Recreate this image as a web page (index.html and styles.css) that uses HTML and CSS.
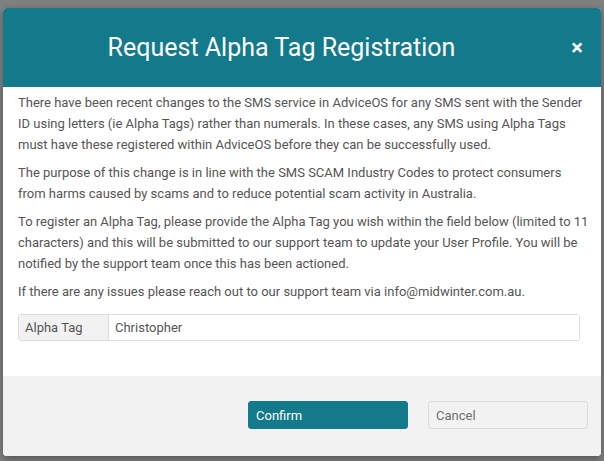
FILE: index.html
```html
<!DOCTYPE html>
<html>
<head>
<meta charset="utf-8">
<link rel="stylesheet" href="styles.css">
</head>
<body>
<div class="backdrop-page">
  <div class="modal">
    <div class="modal-header">
      <h1 class="modal-title">Request Alpha Tag Registration</h1>
      <button class="close" type="button">&times;</button>
    </div>
    <div class="modal-body">
      <p>There have been recent changes to the SMS service in AdviceOS for any SMS sent with the Sender ID using letters (ie Alpha Tags) rather than numerals. In these cases, any SMS using Alpha Tags must have these registered within AdviceOS before they can be successfully used.</p>
      <p>The purpose of this change is in line with the SMS SCAM Industry Codes to protect consumers from harms caused by scams and to reduce potential scam activity in Australia.</p>
      <p>To register an Alpha Tag, please provide the Alpha Tag you wish within the field below (limited to 11 characters) and this will be submitted to our support team to update your User Profile. You will be notified by the support team once this has been actioned.</p>
      <p>If there are any issues please reach out to our support team via info@midwinter.com.au.</p>
      <div class="input-group">
        <span class="addon">Alpha Tag</span>
        <input class="field" type="text" value="Christopher">
      </div>
    </div>
    <div class="modal-footer">
      <button class="btn btn-primary" type="button">Confirm</button>
      <button class="btn btn-default" type="button">Cancel</button>
    </div>
  </div>
</div>
</body>
</html>
```

FILE: styles.css
```css
html, body {
  margin: 0;
  padding: 0;
  height: 461px;
  overflow: hidden;
}
body {
  background: #808080;
  font-family: Roboto, "Liberation Sans", sans-serif;
}
.backdrop-page {
  padding: 8px 3px 0 3px;
}
.modal {
  width: 598px;
  background: #fff;
  border-radius: 4px;
  overflow: hidden;
  box-shadow: 0 3px 8px rgba(0,0,0,0.35);
}
.modal-header {
  height: 79px;
  background: #137a8c;
  display: flex;
  align-items: center;
}
.modal-title {
  flex: 1;
  margin: 0;
  text-align: center;
  color: #fff;
  font-size: 25px;
  font-weight: 400;
  padding-left: 7px;
}
.close {
  width: 48px;
  padding: 0 18px 0 0;
  border: 0;
  background: transparent;
  color: #fff;
  font-family: Roboto, "Liberation Sans", sans-serif;
  font-size: 22px;
  font-weight: 700;
  line-height: 1;
  text-align: right;
}
.modal-body {
  padding: 5px 12px 35px 15px;
  color: #555;
  font-size: 13px;
  line-height: 21px;
}
.modal-body p {
  margin: 0 0 7px 0;
}
.input-group {
  display: flex;
  margin-top: 12px;
  height: 27px;
  border: 1px solid #ddd;
  border-radius: 3px;
  box-sizing: border-box;
  width: 562px;
}
.addon {
  width: 90px;
  background: #f2f2f2;
  border-right: 1px solid #ddd;
  box-sizing: border-box;
  padding-left: 6px;
  line-height: 25px;
  font-size: 13px;
  color: #555;
}
.field {
  flex: 1;
  border: 0;
  padding: 0 6px;
  font-family: Roboto, "Liberation Sans", sans-serif;
  font-size: 13px;
  color: #555;
  outline: none;
  background: #fff;
}
.modal-footer {
  background: #f2f2f2;
  height: 80px;
  display: flex;
  justify-content: flex-end;
  align-items: flex-start;
  gap: 20px;
  padding: 25px 13px 0 0;
  box-sizing: border-box;
}
.btn {
  width: 160px;
  height: 28px;
  border-radius: 3px;
  font-family: Roboto, "Liberation Sans", sans-serif;
  font-size: 13px;
  text-align: left;
  padding: 0 7px;
}
.btn-primary {
  background: #137a8c;
  border: 1px solid #137a8c;
  color: #fff;
}
.btn-default {
  background: #f2f2f2;
  border: 1px solid #dcdcdc;
  color: #6f6f6f;
}
```
